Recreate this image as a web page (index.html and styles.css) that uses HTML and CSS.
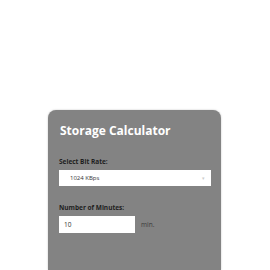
FILE: index.html
```html
<!DOCTYPE html>
<html lang="en">
<head>
    <meta charset="UTF-8">
    <title>Storage Calculator</title>
    <link rel="stylesheet" href="styles.css">
</head>
<body>
    <div class="calculator">
        <h2>Storage Calculator</h2>

        <div class="field">
            <label for="bitrate">Select Bit Rate:</label>
            <div class="select-box">
                <span>1024 KBps</span>
                <span class="arrow">&#9662;</span>
            </div>
        </div>

        <div class="field">
            <label for="minutes">Number of Minutes:</label>
            <div class="input-row">
                <input id="minutes" type="text" value="10">
                <span class="unit">min.</span>
            </div>
        </div>
    </div>
</body>
</html>
```

FILE: styles.css
```css
body {
    margin: 0;
    background: #ffffff;
    font-family: "Open Sans", "Liberation Sans", sans-serif;
    height: 270px;
    overflow: hidden;
}
.calculator {
    margin: 110px 0 0 48px;
    width: 173px;
    height: 160px;
    background: #838383;
    border-radius: 8px 8px 0 0;
    padding: 12px 10px 0 11px;
    box-sizing: border-box;
    box-shadow: 0 0 2px rgba(0, 0, 0, 0.25);
}
.calculator h2 {
    margin: 0 0 17px 1px;
    color: #ffffff;
    font-size: 12px;
    font-weight: 700;
    line-height: 18px;
}
.field {
    margin-bottom: 17px;
}
.field label {
    display: block;
    font-size: 6.5px;
    font-weight: 700;
    color: #1e1e1e;
    margin-bottom: 4px;
}
.select-box {
    display: flex;
    justify-content: space-between;
    align-items: center;
    background: #ffffff;
    height: 16px;
    padding: 0 6px 0 11px;
    font-size: 6px;
    color: #333333;
}
.select-box .arrow {
    color: #cccccc;
    font-size: 5px;
}
.input-row {
    display: flex;
    align-items: center;
    gap: 6px;
}
.input-row input {
    width: 76px;
    height: 17px;
    box-sizing: border-box;
    border: none;
    padding: 0 5px;
    font-family: inherit;
    font-size: 6.5px;
    color: #333333;
}
.unit {
    font-size: 6.5px;
    color: #3a3a3a;
}
```
